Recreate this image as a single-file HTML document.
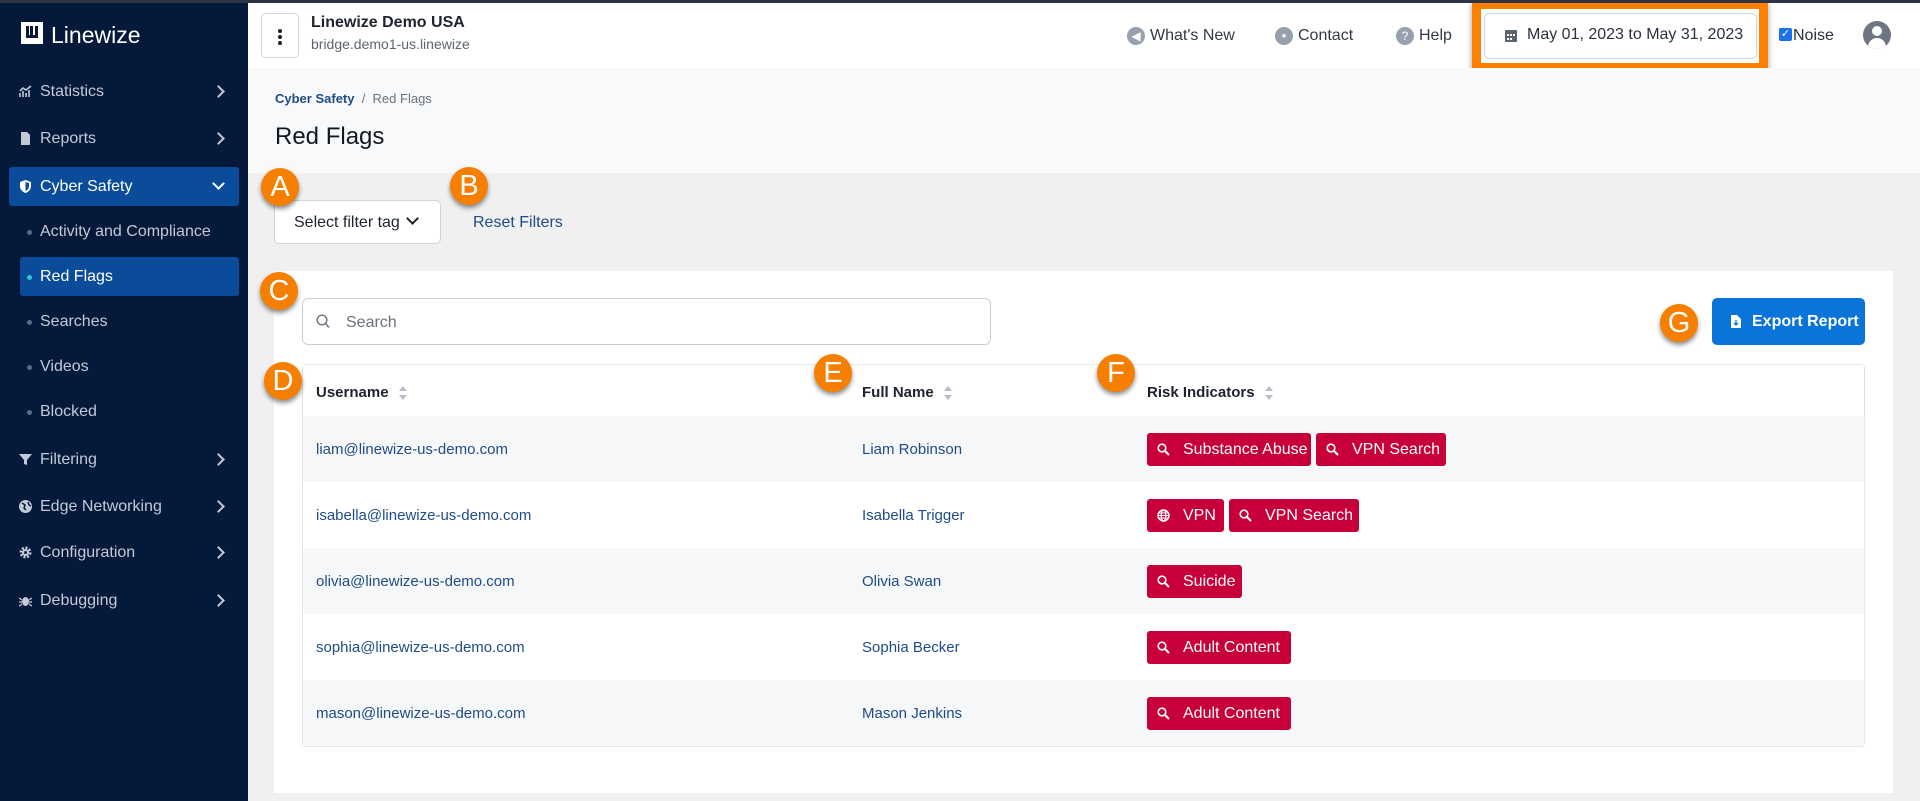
<!DOCTYPE html>
<html><head><meta charset="utf-8"><style>
*{box-sizing:border-box;margin:0;padding:0}
body{width:1920px;height:801px;overflow:hidden;font-family:"Liberation Sans",Arial,sans-serif;background:#f0f0f0;position:relative}
.a{position:absolute}
#sb{left:0;top:0;width:248px;height:801px;background:#05193b}
.si{position:absolute;left:0;width:248px;color:#c3cad6;font-size:16px;height:24px;line-height:24px}
.si .ic{position:absolute;left:19px;top:5px;width:13px;height:13px}
.si .t{position:absolute;left:40px}
.si .ch{position:absolute;left:214px;top:7px;width:9px;height:9px;border-right:2px solid #c3cad6;border-top:2px solid #c3cad6;transform:rotate(45deg)}
.sub{position:absolute;left:0;color:#c3cad6;font-size:16px;height:24px;line-height:24px}
.sub .d{position:absolute;left:27px;top:10px;width:5px;height:5px;border-radius:50%;background:#5b6b85}
.sub .t{position:absolute;left:40px;white-space:nowrap}
.badge{position:absolute;width:38px;height:38px;border-radius:50%;background:#f77f00;color:#fff;font-size:29px;text-align:center;line-height:38px;box-shadow:0 3px 5px rgba(0,0,0,.45)}
.row{position:absolute;left:303px;width:1561px;height:66px;font-size:15px;color:#1f4c86}
.row .c1{position:absolute;left:13px;top:25px}
.row .c2{position:absolute;left:559px;top:25px}
.tag{position:absolute;top:17px;height:33px;background:#c8003a;color:#fff;border-radius:3px;font-size:16px;line-height:33px;padding-left:36px;white-space:nowrap}
.tag svg{position:absolute;left:10px;top:10px}
.th{position:absolute;top:384px;font-size:15px;font-weight:bold;color:#1d2330}
.sort{display:inline-block;vertical-align:middle;margin-left:10px;width:8px;height:14px;position:relative}
.sort:before{content:"";position:absolute;top:0;left:0;border:4px solid transparent;border-bottom:5px solid #b8bec9;border-top:0}
.sort:after{content:"";position:absolute;bottom:0;left:0;border:4px solid transparent;border-top:5px solid #b8bec9;border-bottom:0}
.nav{position:absolute;top:27px;font-size:16px;color:#333a45}
.nav .ci{position:absolute;left:-23px;top:0px;width:18px;height:18px;border-radius:50%;background:#98a0ad;color:#fff;font-size:12px;text-align:center;line-height:18px}
</style></head><body>
<div class="a" style="left:0;top:0;width:1920px;height:3px;background:#2d3343;z-index:5"></div>
<div id="sb" class="a">
 <div class="a" style="left:21px;top:22px;width:22px;height:22px;background:#fff"><div class="a" style="left:5px;top:4px;width:12px;height:12px;border:3px solid #05193b;border-top:none"></div><div class="a" style="left:9px;top:4px;width:3px;height:9px;background:#05193b"></div></div>
 <div class="a" style="left:51px;top:22px;color:#fff;font-size:23px">Linewize</div>
 <div class="si" style="top:80px"><svg class="ic" viewBox="0 0 13 13"><path d="M1 12V8M4 12V6M7 12V8M10 12V5M1 6l3-3 3 2 5-4" stroke="#c3cad6" stroke-width="1.6" fill="none"/></svg><span class="t">Statistics</span><span class="ch"></span></div>
 <div class="si" style="top:127px"><svg class="ic" viewBox="0 0 13 13"><path d="M2 0h6l3 3v10H2z" fill="#c3cad6"/></svg><span class="t">Reports</span><span class="ch"></span></div>
 <div class="a" style="left:9px;top:167px;width:230px;height:39px;background:#0b4c9a;border-radius:3px"></div>
 <div class="si" style="top:175px;color:#fff"><svg class="ic" viewBox="0 0 13 13"><path d="M6.5 0L12 2v4c0 4-3 6-5.5 7C4 12 1 10 1 6V2z" fill="#fff"/><path d="M6.5 2v9C8.5 10 10 8.5 10 6V3z" fill="#0b4c9a"/></svg><span class="t">Cyber Safety</span><span class="ch" style="border-color:#fff;transform:rotate(135deg);top:4px"></span></div>
 <div class="sub" style="top:220px"><span class="d"></span><span class="t">Activity and Compliance</span></div>
 <div class="a" style="left:20px;top:257px;width:219px;height:39px;background:#0b4c9a;border-radius:3px"></div>
 <div class="sub" style="top:265px;color:#fff"><span class="d" style="background:#2ec7d6"></span><span class="t">Red Flags</span></div>
 <div class="sub" style="top:310px"><span class="d"></span><span class="t">Searches</span></div>
 <div class="sub" style="top:355px"><span class="d"></span><span class="t">Videos</span></div>
 <div class="sub" style="top:400px"><span class="d"></span><span class="t">Blocked</span></div>
 <div class="si" style="top:448px"><svg class="ic" viewBox="0 0 13 13"><path d="M0 1h13L8 7v5L5 11V7z" fill="#c3cad6"/></svg><span class="t">Filtering</span><span class="ch"></span></div>
 <div class="si" style="top:495px"><svg class="ic" viewBox="0 0 13 13"><circle cx="6.5" cy="6.5" r="6.5" fill="#c3cad6"/><path d="M3 3l3 2-1 3 2 2M9 2l1 3 2 1" stroke="#05193b" stroke-width="1.5" fill="none"/></svg><span class="t">Edge Networking</span><span class="ch"></span></div>
 <div class="si" style="top:541px"><svg class="ic" viewBox="0 0 13 13"><circle cx="6.5" cy="6.5" r="4.5" fill="none" stroke="#c3cad6" stroke-width="3" stroke-dasharray="2 1.5"/><circle cx="6.5" cy="6.5" r="3.5" fill="#c3cad6"/><circle cx="6.5" cy="6.5" r="1.5" fill="#05193b"/></svg><span class="t">Configuration</span><span class="ch"></span></div>
 <div class="si" style="top:589px"><svg class="ic" viewBox="0 0 13 13"><ellipse cx="6.5" cy="7.5" rx="3.5" ry="4.5" fill="#c3cad6"/><path d="M0 4l3 2M13 4l-3 2M0 8h3M13 8h-3M0 12l3-2M13 12l-3-2" stroke="#c3cad6" stroke-width="1.3"/></svg><span class="t">Debugging</span><span class="ch"></span></div>
</div>
<!-- top bar -->
<div class="a" style="left:248px;top:3px;width:1672px;height:65px;background:#fff"></div>
<div class="a" style="left:261px;top:13px;width:38px;height:45px;border:1px solid #d3d7de;border-radius:5px;background:#fff"><div class="a" style="left:16px;top:15px;width:4px;height:4px;border-radius:50%;background:#222"></div><div class="a" style="left:16px;top:21px;width:4px;height:4px;border-radius:50%;background:#222"></div><div class="a" style="left:16px;top:27px;width:4px;height:4px;border-radius:50%;background:#222"></div></div>
<div class="a" style="left:311px;top:14px;font-size:16px;font-weight:bold;color:#1d2330">Linewize Demo USA</div>
<div class="a" style="left:311px;top:36px;font-size:14px;color:#5d6573">bridge.demo1-us.linewize</div>
<div class="nav" style="left:1150px"><span class="ci">◀</span>What's New</div>
<div class="nav" style="left:1298px"><span class="ci" style="font-size:8px">●</span>Contact</div>
<div class="nav" style="left:1419px"><span class="ci">?</span>Help</div>
<div class="a" style="left:1472px;top:0;width:296px;height:73px;background:#ff8000;box-shadow:0 3px 6px rgba(0,0,0,.4)"></div>
<div class="a" style="left:1481px;top:9px;width:278px;height:54px;background:#fff"></div>
<div class="a" style="left:1484px;top:13px;width:273px;height:46px;border:1px solid #cfd4dc;border-radius:5px;background:#fff"></div>
<svg class="a" style="left:1505px;top:29px" width="12" height="13" viewBox="0 0 12 13"><rect x="0" y="1" width="12" height="12" rx="1" fill="#5a6270"/><rect x="2" y="5" width="2" height="2" fill="#fff"/><rect x="5" y="5" width="2" height="2" fill="#fff"/><rect x="8" y="5" width="2" height="2" fill="#fff"/><rect x="2" y="9" width="2" height="2" fill="#fff"/><rect x="5" y="9" width="2" height="2" fill="#fff"/></svg>
<div class="a" style="left:1527px;top:26px;font-size:16px;color:#2a313d">May 01, 2023 to May 31, 2023</div>
<div class="a" style="left:1779px;top:28px;width:13px;height:13px;background:#1a73e8;border-radius:2px;color:#fff;font-size:11px;line-height:13px;text-align:center">✓</div>
<div class="a" style="left:1793px;top:27px;font-size:16px;color:#2a313d">Noise</div>
<div class="a" style="left:1863px;top:21px;width:28px;height:28px;border-radius:50%;background:#6d7482;overflow:hidden"><div class="a" style="left:9px;top:5px;width:10px;height:10px;border-radius:50%;background:#fff"></div><div class="a" style="left:5px;top:17px;width:18px;height:14px;border-radius:9px 9px 0 0;background:#fff"></div></div>
<!-- header -->
<div class="a" style="left:248px;top:68px;width:1672px;height:105px;background:#f8f9fb"></div>
<div class="a" style="left:275px;top:91px;font-size:13px"><span style="color:#1f4c86;font-weight:bold">Cyber Safety</span><span style="color:#6a717d">&nbsp;&nbsp;/&nbsp;&nbsp;Red Flags</span></div>
<div class="a" style="left:275px;top:123px;font-size:24px;color:#111827">Red Flags</div>
<!-- filter -->
<div class="a" style="left:274px;top:200px;width:167px;height:44px;background:#fff;border:1px solid #cfd4dc;border-radius:5px"></div>
<div class="a" style="left:294px;top:214px;font-size:16px;color:#1d2330">Select filter tag</div>
<div class="a" style="left:408px;top:214px;width:9px;height:9px;border-right:2px solid #222;border-bottom:2px solid #222;transform:rotate(45deg)"></div>
<div class="a" style="left:473px;top:214px;font-size:16px;color:#1f4c86">Reset Filters</div>
<!-- card -->
<div class="a" style="left:274px;top:271px;width:1619px;height:522px;background:#fff"></div>
<div class="a" style="left:302px;top:298px;width:689px;height:47px;border:1px solid #c9ced7;border-radius:6px"></div>
<svg class="a" style="left:316px;top:314px" width="14" height="15" viewBox="0 0 14 15"><circle cx="6" cy="6" r="4.8" stroke="#707784" stroke-width="1.5" fill="none"/><path d="M9.5 9.5l3.5 4" stroke="#707784" stroke-width="1.5"/></svg>
<div class="a" style="left:346px;top:314px;font-size:16px;color:#6a717d">Search</div>
<div class="a" style="left:1712px;top:298px;width:153px;height:47px;background:#0a74da;border-radius:5px;color:#fff;font-size:16px;font-weight:bold;line-height:47px;padding-left:40px">Export Report</div>
<svg class="a" style="left:1731px;top:315px" width="10" height="13" viewBox="0 0 10 13"><path d="M0 0h6l4 4v9H0z" fill="#fff"/><path d="M5 5v5M3 8l2 2 2-2" stroke="#0a74da" stroke-width="1.3" fill="none"/></svg>
<div class="a" style="left:302px;top:364px;width:1563px;height:383px;border:1px solid #e3e6eb;border-radius:4px"></div>
<div class="a" style="left:303px;top:365px;width:1561px;height:51px;background:#fff;box-shadow:0 2px 3px rgba(0,0,0,.06)"></div>
<div class="th" style="left:316px">Username<span class="sort"></span></div>
<div class="th" style="left:862px">Full Name<span class="sort"></span></div>
<div class="th" style="left:1147px">Risk Indicators<span class="sort"></span></div>

<div class="row" style="top:416px;background:#f6f7f9"><span class="c1">liam@linewize-us-demo.com</span><span class="c2">Liam Robinson</span>
 <span class="tag" style="left:844px;width:164px"><svg width="13" height="13" viewBox="0 0 13 13"><circle cx="5" cy="5" r="3.8" stroke="#fff" stroke-width="1.6" fill="none"/><path d="M8 8l4 4" stroke="#fff" stroke-width="2"/></svg>Substance Abuse</span>
 <span class="tag" style="left:1013px;width:130px"><svg width="13" height="13" viewBox="0 0 13 13"><circle cx="5" cy="5" r="3.8" stroke="#fff" stroke-width="1.6" fill="none"/><path d="M8 8l4 4" stroke="#fff" stroke-width="2"/></svg>VPN Search</span></div>
<div class="row" style="top:482px;background:#fff"><span class="c1">isabella@linewize-us-demo.com</span><span class="c2">Isabella Trigger</span>
 <span class="tag" style="left:844px;width:77px"><svg width="13" height="13" viewBox="0 0 13 13"><circle cx="6.5" cy="6.5" r="5.5" stroke="#fff" stroke-width="1.4" fill="none"/><ellipse cx="6.5" cy="6.5" rx="2.3" ry="5.5" stroke="#fff" stroke-width="1.2" fill="none"/><path d="M1 6.5h11M2 4h9M2 9h9" stroke="#fff" stroke-width="1"/></svg>VPN</span>
 <span class="tag" style="left:926px;width:130px"><svg width="13" height="13" viewBox="0 0 13 13"><circle cx="5" cy="5" r="3.8" stroke="#fff" stroke-width="1.6" fill="none"/><path d="M8 8l4 4" stroke="#fff" stroke-width="2"/></svg>VPN Search</span></div>
<div class="row" style="top:548px;background:#f6f7f9"><span class="c1">olivia@linewize-us-demo.com</span><span class="c2">Olivia Swan</span>
 <span class="tag" style="left:844px;width:95px"><svg width="13" height="13" viewBox="0 0 13 13"><circle cx="5" cy="5" r="3.8" stroke="#fff" stroke-width="1.6" fill="none"/><path d="M8 8l4 4" stroke="#fff" stroke-width="2"/></svg>Suicide</span></div>
<div class="row" style="top:614px;background:#fff"><span class="c1">sophia@linewize-us-demo.com</span><span class="c2">Sophia Becker</span>
 <span class="tag" style="left:844px;width:144px"><svg width="13" height="13" viewBox="0 0 13 13"><circle cx="5" cy="5" r="3.8" stroke="#fff" stroke-width="1.6" fill="none"/><path d="M8 8l4 4" stroke="#fff" stroke-width="2"/></svg>Adult Content</span></div>
<div class="row" style="top:680px;height:66px;background:#f6f7f9"><span class="c1">mason@linewize-us-demo.com</span><span class="c2">Mason Jenkins</span>
 <span class="tag" style="left:844px;width:144px"><svg width="13" height="13" viewBox="0 0 13 13"><circle cx="5" cy="5" r="3.8" stroke="#fff" stroke-width="1.6" fill="none"/><path d="M8 8l4 4" stroke="#fff" stroke-width="2"/></svg>Adult Content</span></div>

<div class="badge" style="left:261px;top:168px">A</div>
<div class="badge" style="left:450px;top:167px">B</div>
<div class="badge" style="left:260px;top:272px">C</div>
<div class="badge" style="left:264px;top:362px">D</div>
<div class="badge" style="left:814px;top:354px">E</div>
<div class="badge" style="left:1097px;top:354px">F</div>
<div class="badge" style="left:1660px;top:304px">G</div>
</body></html>
